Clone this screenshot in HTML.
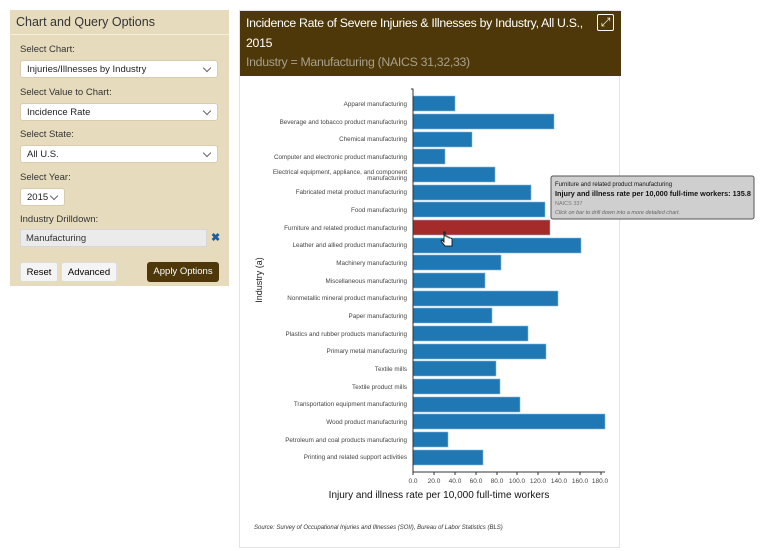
<!DOCTYPE html>
<html><head><meta charset="utf-8"><style>
body{margin:0;width:768px;height:551px;background:#fff;font-family:"Liberation Sans",sans-serif;position:relative;overflow:hidden}
.panel{position:absolute;left:10px;top:10px;width:219px;height:276px;background:#e6dcbd}
.ph{height:25px;border-bottom:1px solid #f3eedd;font-size:12.5px;color:#333;padding:5px 0 0 6px;box-sizing:border-box}
.lbl{position:absolute;left:10px;font-size:9.5px;color:#333}
.sel{position:absolute;left:10px;width:198px;height:18px;background:#fff;border:1px solid #d6ccb0;border-radius:3px;box-sizing:border-box;font-size:9.5px;color:#222;padding:3px 0 0 6px}
.sel:after{content:"";position:absolute;right:7px;top:4px;width:5px;height:5px;border-right:1px solid #666;border-bottom:1px solid #666;transform:rotate(45deg)}
.btn{position:absolute;top:252px;height:20px;font-size:9.5px;border-radius:3px;box-sizing:border-box;text-align:center;padding-top:4px}
.chart{position:absolute;left:239px;top:10px;width:381px;height:538px;border:1px solid #e4e4e4;box-sizing:border-box}
.ch{position:absolute;left:0;top:0;width:381px;height:65px;background:#4e3809;box-sizing:border-box;padding:3px 6px;color:#fff;font-size:12.3px;line-height:19.5px;letter-spacing:-0.3px;white-space:nowrap}
</style></head><body>
<div class="panel">
<div class="ph">Chart and Query Options</div>
<div class="lbl" style="top:34px">Select Chart:</div>
<div class="sel" style="top:50px">Injuries/Illnesses by Industry</div>
<div class="lbl" style="top:77px">Select Value to Chart:</div>
<div class="sel" style="top:93px">Incidence Rate</div>
<div class="lbl" style="top:119px">Select State:</div>
<div class="sel" style="top:135px">All U.S.</div>
<div class="lbl" style="top:162px">Select Year:</div>
<div class="sel" style="top:178px;width:45px">2015</div>
<div class="lbl" style="top:204px">Industry Drilldown:</div>
<div style="position:absolute;left:10px;top:219px;width:187px;height:18px;background:#ebebeb;border:1px solid #d6d6d6;box-sizing:border-box;font-size:9.5px;padding:3px 0 0 5px;color:#333">Manufacturing</div>
<div style="position:absolute;left:201px;top:221px;font-size:11px;color:#1f5f9f;font-weight:bold">✖</div>
<div class="btn" style="left:10px;width:38px;background:#f4f4f4;border:1px solid #ddd">Reset</div>
<div class="btn" style="left:51px;width:56px;background:#f4f4f4;border:1px solid #ddd">Advanced</div>
<div class="btn" style="left:137px;width:72px;background:#4e3809;color:#fff">Apply Options</div>
</div>
<div class="chart">
<div class="ch">Incidence Rate of Severe Injuries &amp; Illnesses by Industry, All U.S.,<br>2015<br><span style="color:#a8a08c">Industry = Manufacturing (NAICS 31,32,33)</span>
<div style="position:absolute;right:7px;top:3px;width:15px;height:15px;border:1px solid #fff;border-radius:2px;font-size:12px;line-height:15px;text-align:center;letter-spacing:0">⤢</div></div>
</div>
<svg style="position:absolute;left:0;top:0" width="768" height="551" font-family="Liberation Sans, sans-serif">
<g font-size="6.3" fill="#444" text-anchor="end">
<text x="407" y="106">Apparel manufacturing</text>
<text x="407" y="124">Beverage and tobacco product manufacturing</text>
<text x="407" y="141">Chemical manufacturing</text>
<text x="407" y="159">Computer and electronic product manufacturing</text>
<text x="407" y="174">Electrical equipment, appliance, and component</text>
<text x="407" y="180">manufacturing</text>
<text x="407" y="194">Fabricated metal product manufacturing</text>
<text x="407" y="212">Food manufacturing</text>
<text x="407" y="230">Furniture and related product manufacturing</text>
<text x="407" y="247">Leather and allied product manufacturing</text>
<text x="407" y="265">Machinery manufacturing</text>
<text x="407" y="283">Miscellaneous manufacturing</text>
<text x="407" y="300">Nonmetallic mineral product manufacturing</text>
<text x="407" y="318">Paper manufacturing</text>
<text x="407" y="336">Plastics and rubber products manufacturing</text>
<text x="407" y="353">Primary metal manufacturing</text>
<text x="407" y="371">Textile mills</text>
<text x="407" y="389">Textile product mills</text>
<text x="407" y="406">Transportation equipment manufacturing</text>
<text x="407" y="424">Wood product manufacturing</text>
<text x="407" y="442">Petroleum and coal products manufacturing</text>
<text x="407" y="459">Printing and related support activities</text>
</g>
<g fill="#1f77b4" stroke="#8ab8dc" stroke-width="0.6">
<rect x="413" y="96" width="42" height="15"/>
<rect x="413" y="114" width="141" height="15"/>
<rect x="413" y="132" width="59" height="15"/>
<rect x="413" y="149" width="32" height="15"/>
<rect x="413" y="167" width="82" height="15"/>
<rect x="413" y="185" width="118" height="15"/>
<rect x="413" y="202" width="132" height="15"/>
<rect x="413" y="220" width="137" height="15" fill="#a52a2a"/>
<rect x="413" y="238" width="168" height="15"/>
<rect x="413" y="255" width="88" height="15"/>
<rect x="413" y="273" width="72" height="15"/>
<rect x="413" y="291" width="145" height="15"/>
<rect x="413" y="308" width="79" height="15"/>
<rect x="413" y="326" width="115" height="15"/>
<rect x="413" y="344" width="133" height="15"/>
<rect x="413" y="361" width="83" height="15"/>
<rect x="413" y="379" width="87" height="15"/>
<rect x="413" y="397" width="107" height="15"/>
<rect x="413" y="414" width="192" height="15"/>
<rect x="413" y="432" width="35" height="15"/>
<rect x="413" y="450" width="70" height="15"/>
</g>
<path d="M411 89H413V472H605" stroke="#333" fill="none" stroke-width="1"/>
<g stroke="#333"><path d="M413 472v3M434 472v3M455 472v3M476 472v3M497 472v3M517 472v3M538 472v3M559 472v3M580 472v3M601 472v3"/></g>
<g font-size="6.5" fill="#444" text-anchor="middle">
<text x="413" y="483">0.0</text><text x="434" y="483">20.0</text><text x="455" y="483">40.0</text><text x="476" y="483">60.0</text><text x="497" y="483">80.0</text><text x="517" y="483">100.0</text><text x="538" y="483">120.0</text><text x="559" y="483">140.0</text><text x="580" y="483">160.0</text><text x="600" y="483">180.0</text>
</g>
<text x="439" y="498" font-size="10" text-anchor="middle" fill="#111">Injury and illness rate per 10,000 full-time workers</text>
<text x="262" y="280" font-size="9" text-anchor="middle" fill="#222" transform="rotate(-90 262 280)">Industry (a)</text>
<text x="254" y="529" font-size="6" font-style="italic" fill="#333">Source: Survey of Occupational Injuries and Illnesses (SOII), Bureau of Labor Statistics (BLS)</text>
<rect x="551" y="176" width="203" height="43" rx="2" fill="#cfcfcf" stroke="#555" stroke-width="1"/>
<text x="555" y="186" font-size="6" fill="#111">Furniture and related product manufacturing</text>
<text x="555" y="196" font-size="7.3" font-weight="bold" fill="#111">Injury and illness rate per 10,000 full-time workers: 135.8</text>
<text x="555" y="205" font-size="5.5" fill="#777">NAICS 337</text>
<text x="555" y="214" font-size="5.5" font-style="italic" fill="#666">Click on bar to drill down into a more detailed chart.</text>
<path d="M444 232v10l-2-2-1 1 4 5h7v-7l-1-1h-2v-1h-2v-1h-2v-4z" fill="#fff" stroke="#000" stroke-width="0.8"/>
</svg>
</body></html>
